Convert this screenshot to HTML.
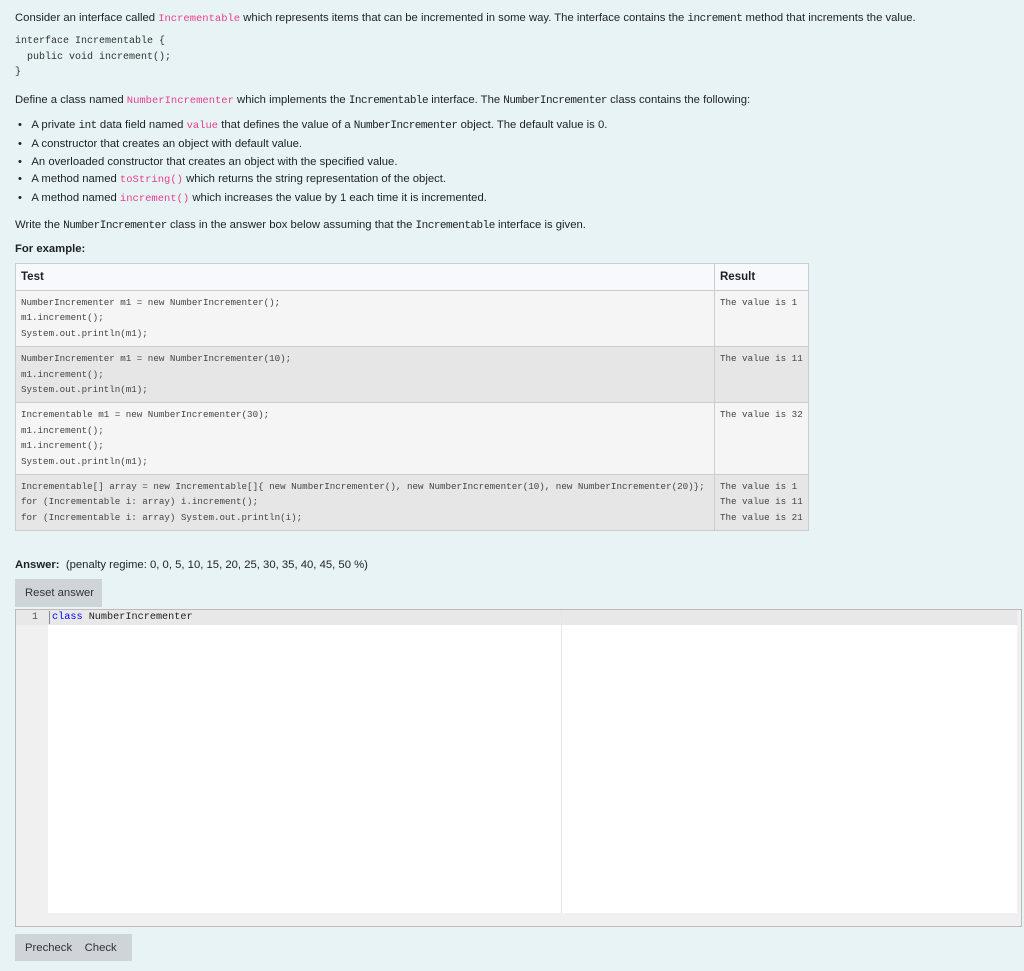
<!DOCTYPE html>
<html><head><meta charset="utf-8"><style>
*{margin:0;padding:0;box-sizing:border-box}
body{width:1024px;height:971px;background:#e7f3f5;font-family:"Liberation Sans",sans-serif;font-size:11.3px;color:#1d2125;position:relative;overflow:hidden}
.a{position:absolute;white-space:nowrap}
.m{font-family:"Liberation Mono",monospace;font-size:10px}
.p{color:#e83e8c;font-family:"Liberation Mono",monospace;font-size:10.5px}
.k{font-family:"Liberation Mono",monospace;font-size:11px;letter-spacing:-0.5px}
.code{color:#333;line-height:15.6px}
table{position:absolute;left:15px;top:263px;width:794px;border-collapse:collapse}
td,th{border:1px solid #ccc;vertical-align:top;text-align:left;padding:5px 5px}
th{background:#f8f9fd;height:27px;padding-top:7px;font-size:11.5px}
td{font-family:"Liberation Mono",monospace;font-size:9.2px;line-height:15.4px;color:#444;padding-top:4px;padding-bottom:5px}
tr.o td{background:#f5f5f5}tr.e td{background:#e6e6e6}
.btn{position:absolute;background:#ced4da;color:#333;font-size:11.3px}
</style></head><body>
<div class="a" style="left:15px;top:12px">Consider an interface called <span class="p">Incrementable</span> which represents items that can be incremented in some way. The interface contains the <span class="k">increment</span> method that increments the value.</div>
<div class="a m code" style="left:15px;top:34px">interface Incrementable {<br>&nbsp;&nbsp;public void increment();<br>}</div>
<div class="a" style="left:15px;top:94px">Define a class named <span class="p">NumberIncrementer</span> which implements the <span class="k">Incrementable</span> interface. The <span class="k">NumberIncrementer</span> class contains the following:</div>
<div class="a" style="left:18px;top:117px;line-height:17.8px">•&nbsp;&nbsp;&nbsp;A private <span class="k">int</span> data field named <span class="p">value</span> that defines the value of a <span class="k">NumberIncrementer</span> object. The default value is 0.<br>•&nbsp;&nbsp;&nbsp;A constructor that creates an object with default value.<br>•&nbsp;&nbsp;&nbsp;An overloaded constructor that creates an object with the specified value.<br>•&nbsp;&nbsp;&nbsp;A method named <span class="p">toString()</span> which returns the string representation of the object.<br>•&nbsp;&nbsp;&nbsp;A method named <span class="p">increment()</span> which increases the value by 1 each time it is incremented.</div>
<div class="a" style="left:15px;top:219px">Write the <span class="k">NumberIncrementer</span> class in the answer box below assuming that the <span class="k">Incrementable</span> interface is given.</div>
<div class="a" style="left:15px;top:243px;font-weight:bold">For example:</div>
<table>
<tr><th style="width:699px">Test</th><th>Result</th></tr>
<tr class="o"><td>NumberIncrementer m1 = new NumberIncrementer();<br>m1.increment();<br>System.out.println(m1);</td><td>The value is 1</td></tr>
<tr class="e"><td>NumberIncrementer m1 = new NumberIncrementer(10);<br>m1.increment();<br>System.out.println(m1);</td><td>The value is 11</td></tr>
<tr class="o"><td>Incrementable m1 = new NumberIncrementer(30);<br>m1.increment();<br>m1.increment();<br>System.out.println(m1);</td><td>The value is 32</td></tr>
<tr class="e"><td>Incrementable[] array = new Incrementable[]{ new NumberIncrementer(), new NumberIncrementer(10), new NumberIncrementer(20)};<br>for (Incrementable i: array) i.increment();<br>for (Incrementable i: array) System.out.println(i);</td><td>The value is 1<br>The value is 11<br>The value is 21</td></tr>
</table>
<div class="a" style="left:15px;top:559px"><b>Answer:</b>&nbsp; (penalty regime: 0, 0, 5, 10, 15, 20, 25, 30, 35, 40, 45, 50 %)</div>
<div class="btn" style="left:15px;top:579px;width:87px;height:28px;padding:8px 0 0 10px">Reset answer</div>
<div style="position:absolute;left:15px;top:609px;width:1007px;height:318px;background:#f0f0f0;border:1px solid #bbb"></div>
<div style="position:absolute;left:48px;top:625px;width:969px;height:288px;background:#fff"></div>
<div style="position:absolute;left:16px;top:610px;width:1001px;height:15px;background:#e8e8e8"></div>
<div style="position:absolute;left:561px;top:610px;width:1px;height:303px;background:#e4e4e4"></div>
<div style="position:absolute;left:49px;top:611px;width:1px;height:13px;background:#888"></div>
<div class="a m" style="left:32px;top:612px;color:#555">1</div>
<div class="a m" style="left:52px;top:612px;color:#222;font-size:10.2px"><span style="color:#00f">class</span> NumberIncrementer</div>
<div class="btn" style="left:15px;top:934px;width:117px;height:27px;padding:8px 0 0 10px">Precheck&nbsp;&nbsp;&nbsp;&nbsp;Check</div>
</body></html>
